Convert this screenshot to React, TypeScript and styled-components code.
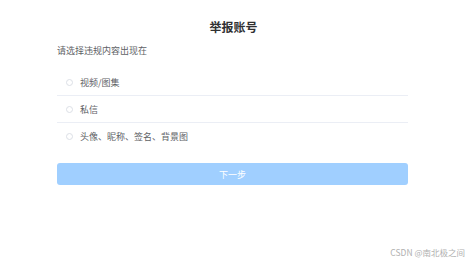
import { createGlobalStyle, styled } from "styled-components";

const GlobalStyle = createGlobalStyle`
  html, body {
    margin: 0;
    padding: 0;
    background: #fff;
  }
  body {
    font-family: "Noto Sans CJK SC", "Noto Sans", sans-serif;
  }
`;

const options = ["视频/图集", "私信", "头像、昵称、签名、背景图"];

const App: React.FC = () => {
  return (
    <Page>
      <GlobalStyle />
      <Panel>
        <Title>举报账号</Title>
        <Prompt>请选择违规内容出现在</Prompt>
        <OptionList>
          {options.map((label, i) => (
            <OptionRow key={label} last={i === options.length - 1}>
              <Radio />
              <OptionLabel>{label}</OptionLabel>
            </OptionRow>
          ))}
        </OptionList>
        <NextBtn>下一步</NextBtn>
      </Panel>
      <Watermark>CSDN @南北极之间</Watermark>
    </Page>
  );
};
export default App;

const Page = styled("div")({
  position: "relative",
  width: "474px",
  height: "263px",
  overflow: "hidden",
});
const Panel = styled("div")({
  width: "351px",
  marginLeft: "57px",
  paddingTop: "19px",
  display: "flex",
  flexDirection: "column",
});
const Title = styled("div")({
  textAlign: "center",
  fontSize: "12px",
  lineHeight: "16px",
  fontWeight: 700,
  color: "#303133",
  paddingLeft: "2px",
});
const Prompt = styled("div")({
  marginTop: "9px",
  fontSize: "9px",
  lineHeight: "14px",
  color: "#606266",
});
const OptionList = styled("div")({
  marginTop: "11px",
  display: "flex",
  flexDirection: "column",
});
const OptionRow = styled("div")<{ last?: boolean }>(({ last }) => ({
  height: "26px",
  display: "flex",
  alignItems: "center",
  paddingLeft: "9px",
  borderBottom: last ? "1px solid transparent" : "1px solid #ebeef5",
}));
const Radio = styled("span")({
  width: "7px",
  height: "7px",
  borderRadius: "50%",
  border: "1px solid #dcdfe6",
  boxSizing: "border-box",
});
const OptionLabel = styled("span")({
  marginLeft: "7px",
  fontSize: "9px",
  color: "#606266",
});
const NextBtn = styled("button")({
  marginTop: "13px",
  width: "100%",
  height: "22px",
  border: "none",
  borderRadius: "3px",
  background: "#a0cfff",
  color: "#fff",
  fontFamily: "inherit",
  fontSize: "9px",
  padding: 0,
});
const Watermark = styled("div")({
  position: "absolute",
  right: "9px",
  bottom: "5px",
  fontSize: "8.5px",
  color: "#b0b0b0",
});
